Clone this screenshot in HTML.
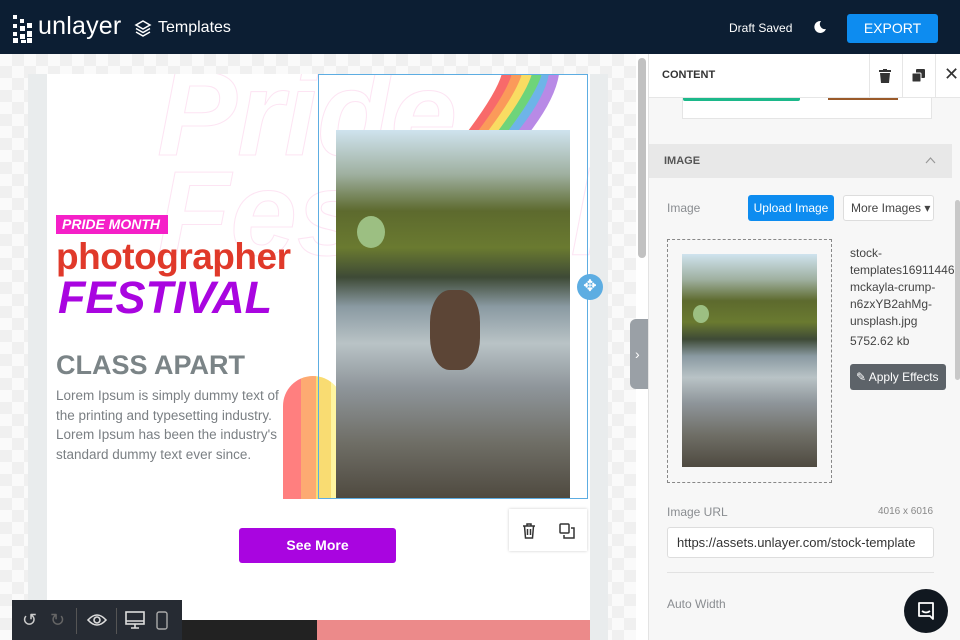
<!DOCTYPE html>
<html><head><meta charset="utf-8"><style>
*{margin:0;padding:0;box-sizing:border-box}
body{width:960px;height:640px;overflow:hidden;position:relative;font-family:"Liberation Sans",sans-serif;background:#fff}
.abs{position:absolute}
.top{left:0;top:0;width:960px;height:54px;background:#0c1e33}
.canvas{left:0;top:54px;width:636px;height:586px;background-color:#fafafa;background-image:linear-gradient(45deg,#f0f0f0 25%,transparent 25%,transparent 75%,#f0f0f0 75%),linear-gradient(45deg,#f0f0f0 25%,transparent 25%,transparent 75%,#f0f0f0 75%);background-size:24px 24px;background-position:0 0,12px 12px}
.ph{background:linear-gradient(180deg,#cfe3ee 0%,#9fb0a0 12%,#5d6a2e 22%,#6a7a30 32%,#3e4a36 40%,#8a9aa2 48%,#b9c3c6 58%,#8e959a 70%,#6f6e66 85%,#4f4a40 100%)}
.lbl{color:#8a8d91;font-size:12px}
</style></head><body>
<div class="abs top">
  <svg class="abs" style="left:13px;top:15px" width="20" height="28" viewBox="0 0 20 28" fill="#fff">
    <rect x="0" y="0" width="4" height="4"/><rect x="7" y="4" width="4" height="4"/><rect x="0" y="9" width="4" height="4"/><rect x="7" y="11" width="5" height="5"/><rect x="14" y="8" width="5" height="5"/><rect x="0" y="17" width="4" height="4"/><rect x="7" y="19" width="5" height="5"/><rect x="14" y="16" width="5" height="6"/><rect x="0" y="23" width="5" height="5"/><rect x="8" y="25" width="5" height="3"/><rect x="14" y="23" width="5" height="5"/>
  </svg>
  <div class="abs" style="left:38px;top:12px;color:#fff;font-size:25px;letter-spacing:0.2px">unlayer</div>
  <svg class="abs" style="left:134px;top:19px" width="18" height="18" viewBox="0 0 18 18" fill="none" stroke="#fff" stroke-width="1.5"><path d="M9 2L16 6 9 10 2 6Z"/><path d="M2 9.5L9 13.5 16 9.5"/><path d="M2 13L9 17 16 13"/></svg>
  <div class="abs" style="left:158px;top:19px;color:#fff;font-size:16px">Templates</div>
  <div class="abs" style="left:729px;top:21px;color:#fff;font-size:12px">Draft Saved</div>
  <svg class="abs" style="left:813px;top:20px" width="14" height="14" viewBox="0 0 14 14"><path d="M8 1A6 6 0 1 0 13 9 5 5 0 0 1 8 1Z" fill="#fff"/></svg>
  <div class="abs" style="left:847px;top:14px;width:91px;height:29px;background:#0d8cf0;border-radius:3px;color:#fff;font-size:14px;text-align:center;line-height:29px">EXPORT</div>
</div>
<div class="abs canvas"></div>
<div class="abs" style="left:28px;top:74px;width:580px;height:566px;background:#e9eced"></div>
<div class="abs" style="left:47px;top:74px;width:543px;height:566px;background:#fff;overflow:hidden">
  <div class="abs" style="left:110px;top:-10px;font-size:120px;font-weight:bold;font-style:italic;color:transparent;-webkit-text-stroke:1px #fde4f3;line-height:100px">Pride<br>Festival</div>
  <svg class="abs" style="left:415px;top:0px" width="100" height="60" viewBox="0 0 100 60" fill="none" stroke-width="10">
    <path d="M10 60 Q40 20 45 0" stroke="#f86a6a"/><path d="M20 60 Q50 20 55 0" stroke="#fb9a5a"/><path d="M30 60 Q60 20 65 0" stroke="#f9dc62"/><path d="M40 60 Q70 20 75 0" stroke="#6ed47a"/><path d="M50 60 Q80 20 85 0" stroke="#6eb4e8"/><path d="M60 60 Q88 25 92 0" stroke="#b88ae6"/>
  </svg>
  <div class="abs" style="left:236px;top:302px;width:60px;height:123px;border-radius:30px 30px 0 0;background:linear-gradient(90deg,#ff7f7f 0 30%,#fdaa72 30% 55%,#f9dc72 55% 80%,#fff5a0 80%)"></div>
</div>
<div class="abs" style="left:56px;top:215px;width:112px;height:19px;background:#f520c8;color:#fff;font-weight:bold;font-style:italic;font-size:14px;line-height:19px;padding-left:6px">PRIDE MONTH</div>
<div class="abs" style="left:56px;top:236px;color:#e0392a;font-weight:bold;font-size:37px;letter-spacing:-0.5px;line-height:42px">photographer</div>
<div class="abs" style="left:58px;top:274px;color:#a905e0;font-weight:bold;font-style:italic;font-size:45px;line-height:48px">FESTIVAL</div>
<div class="abs" style="left:56px;top:350px;color:#7b8487;font-weight:bold;font-size:27px">CLASS APART</div>
<div class="abs" style="left:56px;top:386px;width:236px;color:#7a7f83;font-size:13.5px;line-height:19.5px">Lorem Ipsum is simply dummy text of the printing and typesetting industry. Lorem Ipsum has been the industry's standard dummy text ever since.</div>
<div class="abs ph" style="left:336px;top:130px;width:234px;height:368px"></div>
<div class="abs" style="left:357px;top:216px;width:28px;height:32px;border-radius:50%;background:#9cbf82"></div>
<div class="abs" style="left:430px;top:290px;width:50px;height:80px;border-radius:40%;background:#5c4536"></div>
<div class="abs" style="left:318px;top:74px;width:270px;height:425px;border:1.5px solid #5dade2"></div>
<div class="abs" style="left:577px;top:274px;width:26px;height:26px;border-radius:50%;background:#5dade2;color:#fff;text-align:center;line-height:26px;font-size:16px">✥</div>
<div class="abs" style="left:509px;top:509px;width:78px;height:42px;background:#fff;box-shadow:0 0 3px rgba(0,0,0,.2)"></div>
<svg class="abs" style="left:522px;top:523px" width="14" height="16" viewBox="0 0 14 16" fill="none" stroke="#333" stroke-width="1.5"><path d="M1 3H13M5 3V1H9V3M2.5 3L3.5 15H10.5L11.5 3M5.5 6V12M8.5 6V12"/></svg>
<svg class="abs" style="left:559px;top:523px" width="16" height="16" viewBox="0 0 16 16" fill="none" stroke="#333" stroke-width="1.5"><rect x="1" y="1" width="9" height="9" rx="1"/><path d="M12 5H15V15H5V12"/></svg>
<div class="abs" style="left:239px;top:528px;width:157px;height:35px;background:#a905e0;border-radius:3px;color:#fff;font-weight:bold;font-size:14px;text-align:center;line-height:35px">See More</div>
<div class="abs" style="left:180px;top:620px;width:137px;height:20px;background:#222"></div>
<div class="abs" style="left:317px;top:620px;width:273px;height:20px;background:#ec8a8a"></div>
<div class="abs" style="left:12px;top:600px;width:170px;height:40px;background:#262b33"></div>
<div class="abs" style="left:22px;top:610px;color:#ccc;font-size:18px">↺</div>
<div class="abs" style="left:50px;top:610px;color:#666;font-size:18px">↻</div>
<div class="abs" style="left:76px;top:608px;width:1px;height:26px;background:#555"></div>
<svg class="abs" style="left:87px;top:612px" width="20" height="16" viewBox="0 0 20 16" fill="none" stroke="#ddd" stroke-width="1.6"><path d="M1 8Q10 -2 19 8Q10 18 1 8Z"/><circle cx="10" cy="8" r="3"/></svg>
<div class="abs" style="left:116px;top:608px;width:1px;height:26px;background:#555"></div>
<svg class="abs" style="left:125px;top:611px" width="20" height="18" viewBox="0 0 20 18" fill="none" stroke="#ddd" stroke-width="1.6"><rect x="1" y="1" width="18" height="12"/><path d="M1 10H19M10 13V17M6 17H14"/></svg>
<svg class="abs" style="left:156px;top:611px" width="12" height="19" viewBox="0 0 12 19" fill="none" stroke="#aaa" stroke-width="1.4"><rect x="1" y="1" width="10" height="17" rx="2"/></svg>
<div class="abs" style="left:638px;top:58px;width:8px;height:200px;background:#c1c1c1;border-radius:4px"></div>
<div class="abs" style="left:630px;top:319px;width:20px;height:70px;background:#9aa0a6;border-radius:6px 0 0 6px;color:#fff;font-size:14px;line-height:70px;padding-left:5px">›</div>
<div class="abs" style="left:648px;top:54px;width:312px;height:586px;background:#f7f7f7;border-left:1px solid #e3e3e3"></div>
<div class="abs" style="left:682px;top:88px;width:250px;height:31px;background:#fff;border:1px solid #e5e5e5"></div>
<div class="abs" style="left:683px;top:96px;width:117px;height:5px;background:#1cb88a;border-radius:2px"></div>
<div class="abs" style="left:828px;top:96px;width:70px;height:4px;background:#9a5a2a"></div>
<div class="abs" style="left:649px;top:54px;width:311px;height:44px;background:#fff;border-bottom:1px solid #e6e6e6"></div>
<div class="abs" style="left:662px;top:69px;color:#333;font-weight:bold;font-size:11px">CONTENT</div>
<div class="abs" style="left:869px;top:54px;width:1px;height:44px;background:#e6e6e6"></div>
<div class="abs" style="left:902px;top:54px;width:1px;height:44px;background:#e6e6e6"></div>
<div class="abs" style="left:935px;top:54px;width:1px;height:44px;background:#e6e6e6"></div>
<svg class="abs" style="left:879px;top:69px" width="12" height="14" viewBox="0 0 12 14" fill="#333"><rect x="0" y="1" width="12" height="2"/><rect x="4" y="0" width="4" height="2"/><path d="M1 4H11L10 14H2Z"/></svg>
<svg class="abs" style="left:912px;top:69px" width="13" height="13" viewBox="0 0 13 13" fill="#333"><rect x="4" y="0" width="9" height="9" rx="1"/><rect x="0" y="4" width="9" height="9" rx="1" stroke="#fff" stroke-width="1"/></svg>
<div class="abs" style="left:944px;top:64px;color:#333;font-size:18px">✕</div>
<div class="abs" style="left:649px;top:144px;width:303px;height:34px;background:#e8e8e8"></div>
<div class="abs" style="left:664px;top:155px;color:#555;font-weight:bold;font-size:11px">IMAGE</div>
<svg class="abs" style="left:925px;top:157px" width="11" height="7" viewBox="0 0 11 7" fill="none" stroke="#999" stroke-width="1.2"><path d="M1 6L5.5 1 10 6"/></svg>
<div class="abs lbl" style="left:667px;top:201px">Image</div>
<div class="abs" style="left:748px;top:195px;width:86px;height:26px;background:#0d8cf0;border-radius:3px;color:#fff;font-size:12px;text-align:center;line-height:26px">Upload Image</div>
<div class="abs" style="left:843px;top:195px;width:91px;height:26px;background:#fff;border:1px solid #ddd;border-radius:3px;color:#444;font-size:12px;line-height:24px;padding-left:7px">More Images ▾</div>
<div class="abs" style="left:667px;top:239px;width:165px;height:244px;border:1.5px dashed #888"></div>
<div class="abs ph" style="left:682px;top:254px;width:135px;height:213px"></div>
<div class="abs" style="left:693px;top:305px;width:16px;height:18px;border-radius:50%;background:#9cbf82"></div>
<div class="abs" style="left:850px;top:245px;color:#444;font-size:12px;line-height:17px;width:110px;overflow:hidden;white-space:nowrap">stock-<br>templates16911446<br>mckayla-crump-<br>n6zxYB2ahMg-<br>unsplash.jpg</div>
<div class="abs" style="left:850px;top:334px;color:#444;font-size:12px">5752.62 kb</div>
<div class="abs" style="left:850px;top:364px;width:96px;height:26px;background:#5d6369;border-radius:3px;color:#fff;font-size:12px;line-height:26px;padding-left:6px">✎ Apply Effects</div>
<div class="abs lbl" style="left:667px;top:505px">Image URL</div>
<div class="abs" style="left:878px;top:506px;color:#888;font-size:10px">4016 x 6016</div>
<div class="abs" style="left:667px;top:527px;width:267px;height:31px;background:#fff;border:1px solid #ddd;border-radius:3px;color:#333;font-size:13px;line-height:30px;padding-left:9px;white-space:nowrap;overflow:hidden">https://assets.unlayer.com/stock-template</div>
<div class="abs" style="left:667px;top:572px;width:267px;height:1px;background:#e2e2e2"></div>
<div class="abs lbl" style="left:667px;top:597px">Auto Width</div>
<div class="abs" style="left:955px;top:200px;width:5px;height:180px;background:#c8c8c8;border-radius:3px"></div>
<div class="abs" style="left:904px;top:589px;width:44px;height:44px;border-radius:50%;background:#111820"></div>
<svg class="abs" style="left:916px;top:601px" width="20" height="20" viewBox="0 0 20 20" fill="none" stroke="#fff" stroke-width="1.8"><path d="M3 2H17V18L14 15H3Z" stroke-linejoin="round"/><path d="M6 10Q10 13 14 10"/></svg>
</body></html>
